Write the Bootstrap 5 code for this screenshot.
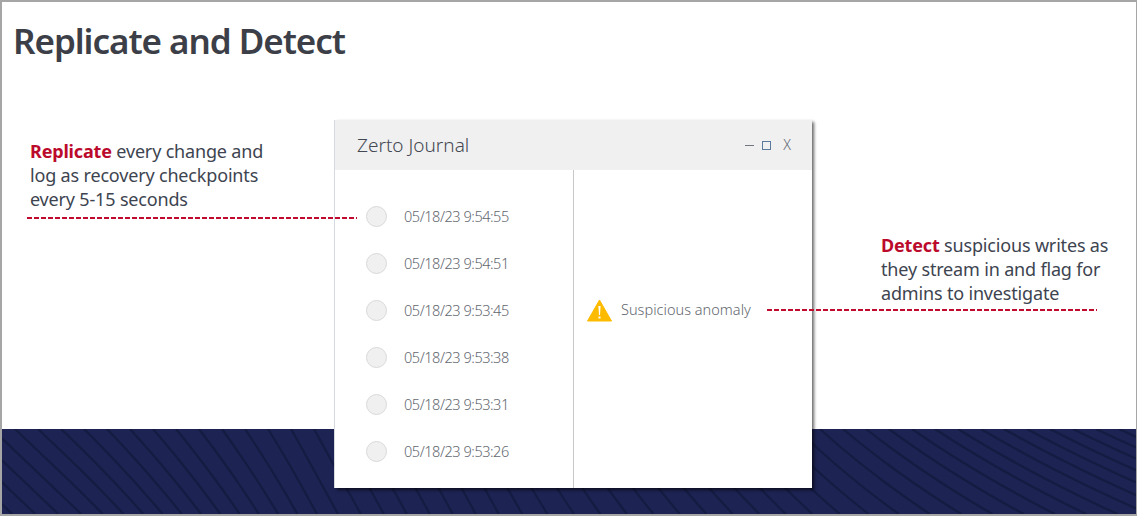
<!DOCTYPE html>
<html lang="en">

<head>
  <meta charset="UTF-8">
  <meta name="viewport" content="width=device-width, initial-scale=1.0">
  <title>Replicate and Detect</title>
  <link href="https://cdn.jsdelivr.net/npm/bootstrap@5.3.6/dist/css/bootstrap.min.css" rel="stylesheet">
  <style>
    html, body {
      height: 100%;
      overflow: hidden;
    }

    body {
      background: #fff;
      font-family: "Noto Sans", "Liberation Sans", sans-serif;
      color: #3d4450;
    }

    .slide {
      height: 516px;
      border: solid #a6a6a6;
      border-width: 2px 1px 2px 2px;
      overflow: hidden;
    }

    .slide-title {
      margin: 0;
      padding: 17px 0 0 11px;
      height: 118px;
      font-size: 35px;
      line-height: 44px;
      font-weight: 600;
      letter-spacing: -1.05px;
      color: #3c3f47;
    }

    .stage {
      z-index: 1;
      height: 368px;
    }

    .callout {
      font-size: 18px;
      line-height: 24px;
      letter-spacing: -0.17px;
    }

    .callout b {
      color: #bb0a2b;
      font-weight: 700;
    }

    .callout-left {
      width: 333px;
      padding: 19px 0 0 28px;
    }

    .callout-left p {
      width: 250px;
    }

    .callout-right {
      width: 324px;
      padding: 113px 0 0 69px;
    }

    .journal {
      width: 477px;
      height: 368px;
      background: #fff;
      box-shadow: -1px 0 0 #d5d9e0, 2px 2px 3px rgba(0, 0, 0, .6);
    }

    .journal-head {
      height: 50px;
      background: #f0f0f0;
      padding: 0 21px 0 22px;
    }

    .journal-name {
      font-size: 19px;
      font-weight: 300;
      letter-spacing: 0;
      color: #434852;
    }

    .win-min {
      width: 9px;
      border-top: 1px solid #6f7680;
    }

    .win-max {
      width: 9px;
      height: 9px;
      border: 1px solid #5b7a9c;
    }

    .win-close {
      font-size: 14px;
      font-weight: 300;
      line-height: 1;
      color: #5f6670;
    }

    .journal-list {
      width: 239px;
      height: 318px;
      border-right: 1px solid #c8c8c8;
      padding: 23px 0 0 31px;
    }

    .journal-row {
      height: 47px;
      gap: 17px;
      font-size: 14.5px;
      font-weight: 300;
      letter-spacing: -0.45px;
      color: #62676f;
    }

    .journal-dot {
      width: 21px;
      height: 21px;
      background: #f0f0f0;
      border: 1px solid #d9d9d9;
      border-radius: 50%;
    }

    .journal-detail {
      padding: 0 0 0 13px;
      height: 280px;
      gap: 9px;
      font-size: 14.5px;
      font-weight: 300;
      letter-spacing: 0.03px;
      color: #62676f;
    }

    .band {
      left: 0;
      right: 0;
      bottom: 0;
      height: 85px;
      background: #1d2353;
    }

    .dash-line {
      height: 2px;
      width: 330px;
      background: repeating-linear-gradient(90deg, #c00a2e 0 5px, transparent 5px 7px);
      z-index: 2;
    }

    .dash-left {
      left: 25px;
      top: 215px;
    }

    .dash-right {
      left: 765px;
      top: 307px;
    }
  </style>
</head>

<body>

  <div class="slide position-relative">
    <div class="band position-absolute">
      <svg id="waves" width="100%" height="85" viewBox="0 0 1134 85" fill="none" stroke="#151c42" stroke-width="2.2"></svg>
    </div>

    <h1 class="slide-title">Replicate and Detect</h1>

    <div class="stage d-flex position-relative">
      <div class="callout callout-left">
        <p class="m-0"><b>Replicate</b> every change and log as recovery checkpoints every 5-15 seconds</p>
      </div>

      <div class="journal flex-shrink-0">
        <div class="journal-head d-flex align-items-center justify-content-between">
          <span class="journal-name">Zerto Journal</span>
          <div class="d-flex align-items-center gap-2">
            <span class="win-min"></span>
            <span class="win-max"></span>
            <span class="win-close ms-1">X</span>
          </div>
        </div>
        <div class="d-flex align-items-start">
          <div class="journal-list">
            <div class="journal-row d-flex align-items-center"><span class="journal-dot"></span>05/18/23 9:54:55</div>
            <div class="journal-row d-flex align-items-center"><span class="journal-dot"></span>05/18/23 9:54:51</div>
            <div class="journal-row d-flex align-items-center"><span class="journal-dot"></span>05/18/23 9:53:45</div>
            <div class="journal-row d-flex align-items-center"><span class="journal-dot"></span>05/18/23 9:53:38</div>
            <div class="journal-row d-flex align-items-center"><span class="journal-dot"></span>05/18/23 9:53:31</div>
            <div class="journal-row d-flex align-items-center"><span class="journal-dot"></span>05/18/23 9:53:26</div>
          </div>
          <div class="journal-detail d-flex align-items-center flex-grow-1">
            <svg width="25" height="23" viewBox="0 0 25 23">
              <path d="M12.5 1 L24.5 22 H0.5 Z" fill="#fdbb00" stroke="#fdbb00" stroke-linejoin="round"/>
              <path d="M11.4 7 H13.6 L13 16 H12 Z" fill="#fff"/>
              <rect x="11.5" y="17.5" width="2" height="2" fill="#fff"/>
            </svg>
            <span>Suspicious anomaly</span>
          </div>
        </div>
      </div>

      <div class="callout callout-right">
        <p class="m-0"><b>Detect</b> suspicious writes as they stream in and flag for admins to investigate</p>
      </div>
    </div>

    <div class="dash-line dash-left position-absolute"></div>
    <div class="dash-line dash-right position-absolute"></div>
  </div>

  <script src="https://cdn.jsdelivr.net/npm/bootstrap@5.3.6/dist/js/bootstrap.bundle.min.js"></script>
  <script>
    // background curves of the footer band
    const waves = document.getElementById("waves");
    function slope(x) {
      if (x < 60) return 1.05;
      if (x < 300) return 1.05 - (x - 60) / 240 * 0.5;
      if (x < 500) return 0.55;
      if (x < 800) return 0.55 + (x - 500) / 300 * 0.5;
      return 1.05 + (x - 800) / 330 * 1.2;
    }
    let markup = "";
    for (let start = -700; start < 1150; start += 23) {
      let x = start, y = 0, d = `M${x} ${y}`;
      while (y < 85) {
        x += slope(x) * 5;
        y += 5;
        d += ` L${x.toFixed(1)} ${y}`;
      }
      markup += `<path d="${d}"/>`;
    }
    waves.innerHTML = markup;
  </script>
</body>

</html>
